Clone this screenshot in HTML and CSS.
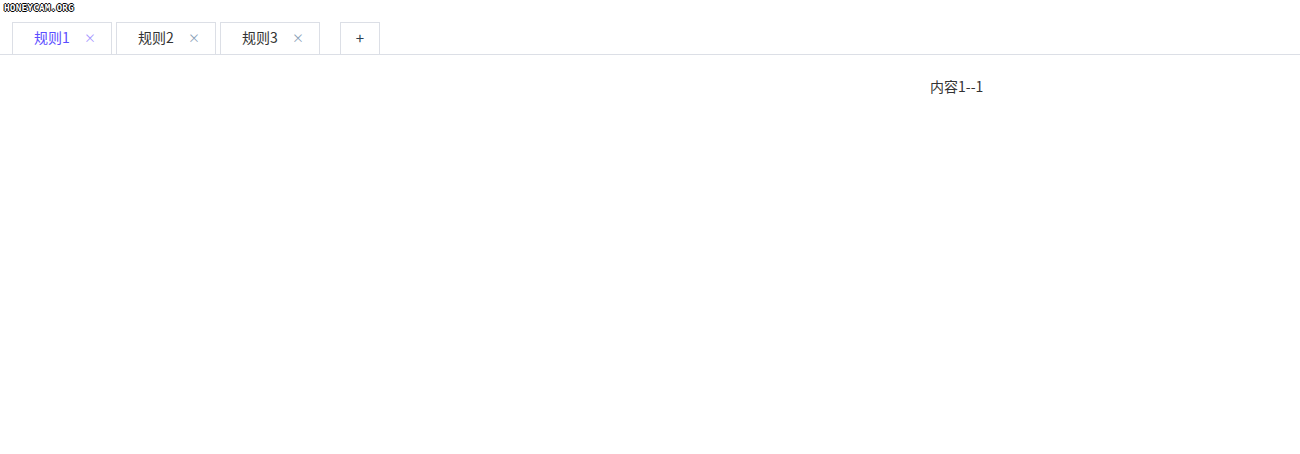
FILE: index.html
```html
<!DOCTYPE html>
<html lang="zh-CN">
<head>
  <meta charset="UTF-8">
  <title>规则</title>
  <link rel="stylesheet" href="styles.css">
</head>
<body>
  <div class="watermark">HONEYCAM.ORG</div>
  <div class="tabs">
    <div class="tab active"><span class="tab-label">规则1</span><span class="tab-close">×</span></div>
    <div class="tab"><span class="tab-label">规则2</span><span class="tab-close">×</span></div>
    <div class="tab"><span class="tab-label">规则3</span><span class="tab-close">×</span></div>
    <div class="tab-add">+</div>
  </div>
  <div class="content">内容1--1</div>
</body>
</html>
```

FILE: styles.css
```css
body {
  margin: 0;
  font-family: "Microsoft YaHei", "Noto Sans CJK SC", "Liberation Sans", sans-serif;
  font-size: 14px;
  color: #333;
  background: #fff;
}

/* Recorder watermark */
.watermark {
  position: absolute;
  top: 2px;
  left: 4px;
  font-family: "DejaVu Sans Mono", monospace;
  font-size: 9.5px;
  font-weight: bold;
  letter-spacing: 0.1px;
  color: #fff;
  text-shadow: 1px 0 0 #000, -1px 0 0 #000, 0 1px 0 #000, 0 -1px 0 #000;
}

/* Tabs */
.tabs {
  display: flex;
  align-items: flex-end;
  gap: 4px;
  margin-top: 22px;
  padding-left: 12px;
  border-bottom: 1px solid #dcdfe6;
}

.tab {
  display: flex;
  align-items: center;
  box-sizing: border-box;
  width: 100px;
  height: 32px;
  padding: 0 0 3px 21px;
  border: 1px solid #dcdfe6;
  border-bottom: none;
  cursor: pointer;
}

.tab-label {
  width: 50px;
}

.tab-close {
  font-size: 12px;
  color: #8aa0b8;
}

.tab.active .tab-label {
  color: #5b4dff;
}

.tab.active .tab-close {
  color: #a596ff;
}

.tab-add {
  box-sizing: border-box;
  width: 40px;
  height: 32px;
  margin-left: 16px;
  border: 1px solid #dcdfe6;
  border-bottom: none;
  text-align: center;
  line-height: 29px;
  font-size: 15px;
  color: #2c3e50;
}

/* Content */
.content {
  padding: 21px 0 0 930px;
}
```
